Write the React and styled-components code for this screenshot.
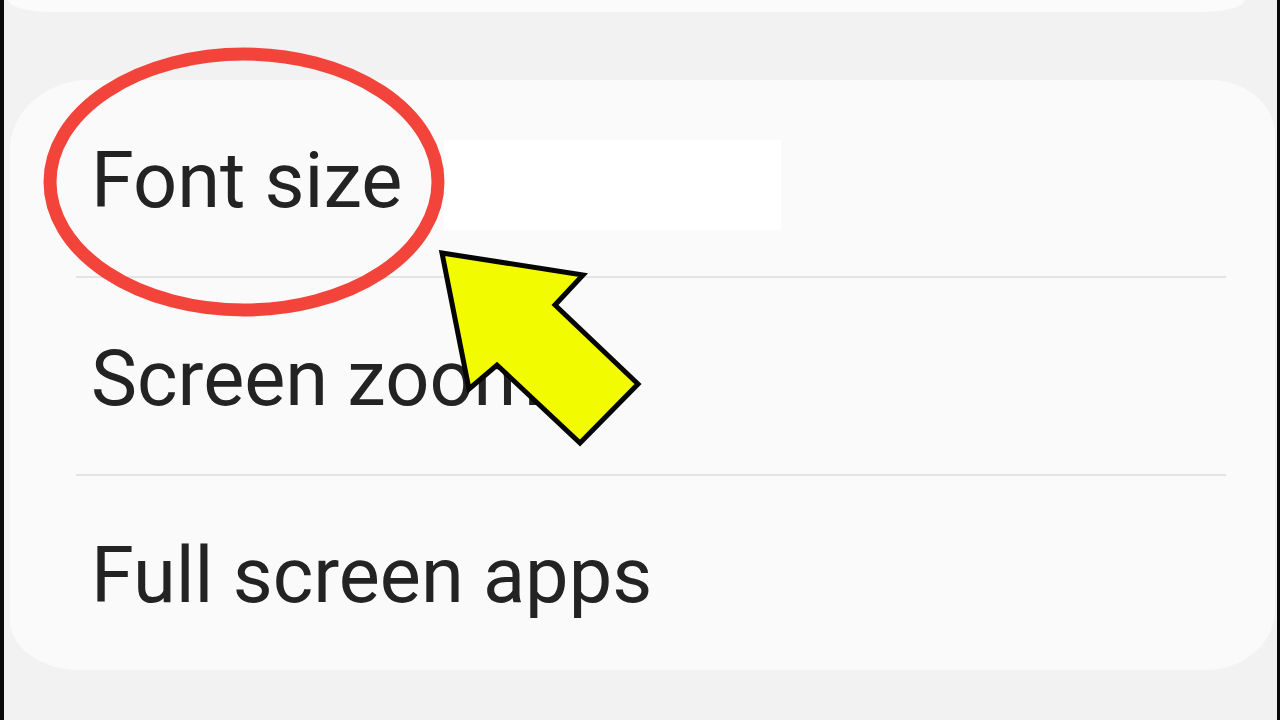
import styled, { createGlobalStyle } from "styled-components";

const GlobalStyle = createGlobalStyle`
  body {
    margin: 0;
    background: #0a0a0a;
    font-family: Roboto, "Noto Sans", sans-serif;
  }
`;

const items = ["Font size", "Screen zoom", "Full screen apps"];

function App() {
  return (
    <>
      <GlobalStyle />
      <Frame>
        <TopCard />
        <Card>
          {items.map((label, i) => (
            <div key={label}>
              {i > 0 && <Divider />}
              <Row>
                <Label>{label}</Label>
                {i === 0 && <Blank />}
              </Row>
            </div>
          ))}
        </Card>

        <Highlight viewBox="0 0 402 270">
          <ellipse cx="201" cy="135" rx="194" ry="128" />
        </Highlight>

        <Pointer viewBox="0 0 210 205">
          <polygon points="6,6 147,28 119,58 202,137 144,196 61,118 33,142" />
        </Pointer>
      </Frame>
    </>
  );
}

const Frame = styled.div`
  position: relative;
  height: 720px;
  background: #f2f2f2;
  border-left: 4px solid #0a0a0a;
  border-right: 3px solid #0a0a0a;
  overflow: hidden;
`;

const TopCard = styled.div`
  height: 12px;
  margin: 0 32px 0 4px;
  background: #fbfbfb;
  border-radius: 0 0 45px 45px / 0 0 12px 12px;
`;

const Card = styled.div`
  margin: 68px 2px 0 6px;
  background: #fafafa;
  border-radius: 80px 65px 70px 70px / 70px 55px 60px 50px;
`;

const Row = styled.div`
  display: flex;
  align-items: center;
  gap: 42px;
  height: 196px;
  box-sizing: border-box;
  padding: 6px 0 0 81px;

  div:last-child > & {
    height: 194px;
  }
`;

const Label = styled.span`
  font-family: Roboto, "Noto Sans", sans-serif;
  font-size: 77.5px;
  line-height: 1;
  color: #232323;
  white-space: nowrap;
`;

const Blank = styled.div`
  width: 337px;
  height: 90px;
  margin-top: 8px;
  background: #ffffff;
`;

const Divider = styled.div`
  height: 2px;
  margin: 0 49px 0 66px;
  background: #e4e4e4;
`;

const Highlight = styled.svg`
  position: absolute;
  left: 39px;
  top: 47px;
  width: 402px;
  height: 270px;
  fill: none;
  stroke: #f2443a;
  stroke-width: 13;
`;

const Pointer = styled.svg`
  position: absolute;
  left: 432px;
  top: 247px;
  width: 210px;
  height: 205px;
  fill: #f3fb00;
  stroke: #050505;
  stroke-width: 5;
  stroke-linejoin: miter;
`;

export default App;
